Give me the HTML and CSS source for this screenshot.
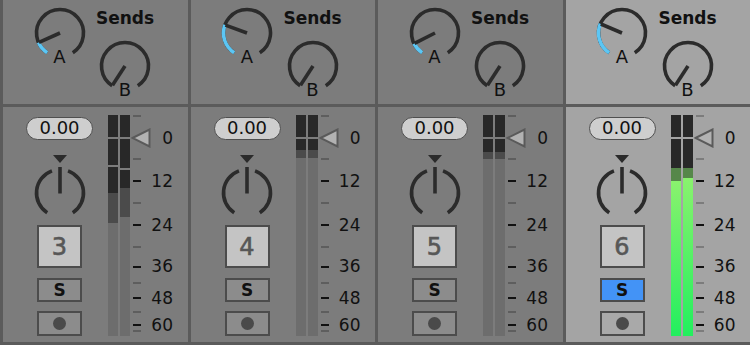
FILE: index.html
```html
<!DOCTYPE html>
<html>
<head>
<meta charset="utf-8">
<link rel="stylesheet" href="styles.css">
</head>
<body>
<div class="mixer">

  <!-- Track 3 -->
  <div class="strip">
    <div class="sends">
      <div class="knob knob-a">
        <svg viewBox="0 0 54 54"><path class="trk" d="M14.2 46.71A23.5 23.5 0 1 1 39.8 46.71"/><path class="val" d="M14.2 46.71A23.5 23.5 0 0 1 5.53 36.56"/><path class="ptr" d="M27 27L5.99 36.35"/></svg>
        <span class="klbl">A</span>
      </div>
      <div class="side">
        <h2>Sends</h2>
        <div class="knob">
          <svg viewBox="0 0 54 54"><path class="trk" d="M14.2 46.71A23.5 23.5 0 1 1 39.8 46.71"/><path class="ptr" d="M27 27L14.47 46.29"/></svg>
          <span class="klbl">B</span>
        </div>
      </div>
    </div>
    <div class="main">
      <div class="ctl">
        <div class="vol">0.00</div>
        <svg class="pan" viewBox="0 0 54 66"><path class="tri" d="M20 1H34L27 9Z"/><path class="trk" d="M14.2 58.71A23.5 23.5 0 0 1 18.96 16.92"/><path class="trk" d="M35.04 16.92A23.5 23.5 0 0 1 39.8 58.71"/><path class="ptr" d="M27 13V39.5"/></svg>
        <div class="num">3</div>
        <div class="btn solo">S</div>
        <div class="btn arm"><i></i></div>
      </div>
      <div class="meter">
        <div class="bar"><div class="clip"></div><div class="body"><b class="dk" style="height:26px"></b><b class="gp" style="height:2px"></b><b class="dk" style="height:26px"></b><b class="md" style="height:30px"></b><b class="lt"></b></div></div>
        <div class="bar"><div class="clip"></div><div class="body"><b class="dk" style="height:29px"></b><b class="gp" style="height:2px"></b><b class="dk" style="height:18px"></b><b class="md" style="height:29px"></b><b class="lt"></b></div></div>
      </div>
      <div class="scale">
        <i class="tk mn" style="top:8px"></i><i class="tk mn" style="top:51px"></i><i class="tk mj" style="top:73px"></i><i class="tk mn" style="top:95px"></i><i class="tk mj" style="top:117px"></i><i class="tk mn" style="top:139px"></i><i class="tk mj" style="top:159px"></i><i class="tk mn" style="top:175px"></i><i class="tk mj" style="top:190px"></i><i class="tk mn" style="top:204px"></i><i class="tk mj" style="top:217px"></i><i class="tk mn" style="top:223px"></i>
        <svg class="peak" viewBox="0 0 20 20"><path d="M1.5 10L18.5 1.5V18.5Z"/></svg>
        <span class="sl" style="top:23px">0</span><span class="sl" style="top:66px">12</span><span class="sl" style="top:110px">24</span><span class="sl" style="top:151px">36</span><span class="sl" style="top:183px">48</span><span class="sl" style="top:210px">60</span>
      </div>
    </div>
  </div>

  <!-- Track 4 -->
  <div class="strip">
    <div class="sends">
      <div class="knob knob-a">
        <svg viewBox="0 0 54 54"><path class="trk" d="M14.2 46.71A23.5 23.5 0 1 1 39.8 46.71"/><path class="val" d="M14.2 46.71A23.5 23.5 0 0 1 4.92 18.96"/><path class="ptr" d="M27 27L5.39 19.13"/></svg>
        <span class="klbl">A</span>
      </div>
      <div class="side">
        <h2>Sends</h2>
        <div class="knob">
          <svg viewBox="0 0 54 54"><path class="trk" d="M14.2 46.71A23.5 23.5 0 1 1 39.8 46.71"/><path class="ptr" d="M27 27L14.47 46.29"/></svg>
          <span class="klbl">B</span>
        </div>
      </div>
    </div>
    <div class="main">
      <div class="ctl">
        <div class="vol">0.00</div>
        <svg class="pan" viewBox="0 0 54 66"><path class="tri" d="M20 1H34L27 9Z"/><path class="trk" d="M14.2 58.71A23.5 23.5 0 0 1 18.96 16.92"/><path class="trk" d="M35.04 16.92A23.5 23.5 0 0 1 39.8 58.71"/><path class="ptr" d="M27 13V39.5"/></svg>
        <div class="num">4</div>
        <div class="btn solo">S</div>
        <div class="btn arm"><i></i></div>
      </div>
      <div class="meter">
        <div class="bar"><div class="clip"></div><div class="body"><b class="dk" style="height:11px"></b><b class="md" style="height:8px"></b><b class="lt"></b></div></div>
        <div class="bar"><div class="clip"></div><div class="body"><b class="dk" style="height:11px"></b><b class="md" style="height:8px"></b><b class="lt"></b></div></div>
      </div>
      <div class="scale">
        <i class="tk mn" style="top:8px"></i><i class="tk mn" style="top:51px"></i><i class="tk mj" style="top:73px"></i><i class="tk mn" style="top:95px"></i><i class="tk mj" style="top:117px"></i><i class="tk mn" style="top:139px"></i><i class="tk mj" style="top:159px"></i><i class="tk mn" style="top:175px"></i><i class="tk mj" style="top:190px"></i><i class="tk mn" style="top:204px"></i><i class="tk mj" style="top:217px"></i><i class="tk mn" style="top:223px"></i>
        <svg class="peak" viewBox="0 0 20 20"><path d="M1.5 10L18.5 1.5V18.5Z"/></svg>
        <span class="sl" style="top:23px">0</span><span class="sl" style="top:66px">12</span><span class="sl" style="top:110px">24</span><span class="sl" style="top:151px">36</span><span class="sl" style="top:183px">48</span><span class="sl" style="top:210px">60</span>
      </div>
    </div>
  </div>

  <!-- Track 5 -->
  <div class="strip">
    <div class="sends">
      <div class="knob knob-a">
        <svg viewBox="0 0 54 54"><path class="trk" d="M14.2 46.71A23.5 23.5 0 1 1 39.8 46.71"/><path class="val" d="M14.2 46.71A23.5 23.5 0 0 1 6.06 37.67"/><path class="ptr" d="M27 27L6.51 37.44"/></svg>
        <span class="klbl">A</span>
      </div>
      <div class="side">
        <h2>Sends</h2>
        <div class="knob">
          <svg viewBox="0 0 54 54"><path class="trk" d="M14.2 46.71A23.5 23.5 0 1 1 39.8 46.71"/><path class="ptr" d="M27 27L14.47 46.29"/></svg>
          <span class="klbl">B</span>
        </div>
      </div>
    </div>
    <div class="main">
      <div class="ctl">
        <div class="vol">0.00</div>
        <svg class="pan" viewBox="0 0 54 66"><path class="tri" d="M20 1H34L27 9Z"/><path class="trk" d="M14.2 58.71A23.5 23.5 0 0 1 18.96 16.92"/><path class="trk" d="M35.04 16.92A23.5 23.5 0 0 1 39.8 58.71"/><path class="ptr" d="M27 13V39.5"/></svg>
        <div class="num">5</div>
        <div class="btn solo">S</div>
        <div class="btn arm"><i></i></div>
      </div>
      <div class="meter">
        <div class="bar"><div class="clip"></div><div class="body"><b class="dk" style="height:13px"></b><b class="md" style="height:7px"></b><b class="lt"></b></div></div>
        <div class="bar"><div class="clip"></div><div class="body"><b class="dk" style="height:13px"></b><b class="md" style="height:7px"></b><b class="lt"></b></div></div>
      </div>
      <div class="scale">
        <i class="tk mn" style="top:8px"></i><i class="tk mn" style="top:51px"></i><i class="tk mj" style="top:73px"></i><i class="tk mn" style="top:95px"></i><i class="tk mj" style="top:117px"></i><i class="tk mn" style="top:139px"></i><i class="tk mj" style="top:159px"></i><i class="tk mn" style="top:175px"></i><i class="tk mj" style="top:190px"></i><i class="tk mn" style="top:204px"></i><i class="tk mj" style="top:217px"></i><i class="tk mn" style="top:223px"></i>
        <svg class="peak" viewBox="0 0 20 20"><path d="M1.5 10L18.5 1.5V18.5Z"/></svg>
        <span class="sl" style="top:23px">0</span><span class="sl" style="top:66px">12</span><span class="sl" style="top:110px">24</span><span class="sl" style="top:151px">36</span><span class="sl" style="top:183px">48</span><span class="sl" style="top:210px">60</span>
      </div>
    </div>
  </div>

  <!-- Track 6 (selected) -->
  <div class="strip sel">
    <div class="sends">
      <div class="knob knob-a">
        <svg viewBox="0 0 54 54"><path class="trk" d="M14.2 46.71A23.5 23.5 0 1 1 39.8 46.71"/><path class="val" d="M14.2 46.71A23.5 23.5 0 0 1 5.37 17.82"/><path class="ptr" d="M27 27L5.83 18.01"/></svg>
        <span class="klbl">A</span>
      </div>
      <div class="side">
        <h2>Sends</h2>
        <div class="knob">
          <svg viewBox="0 0 54 54"><path class="trk" d="M14.2 46.71A23.5 23.5 0 1 1 39.8 46.71"/><path class="ptr" d="M27 27L14.47 46.29"/></svg>
          <span class="klbl">B</span>
        </div>
      </div>
    </div>
    <div class="main">
      <div class="ctl">
        <div class="vol">0.00</div>
        <svg class="pan" viewBox="0 0 54 66"><path class="tri" d="M20 1H34L27 9Z"/><path class="trk" d="M14.2 58.71A23.5 23.5 0 0 1 18.96 16.92"/><path class="trk" d="M35.04 16.92A23.5 23.5 0 0 1 39.8 58.71"/><path class="ptr" d="M27 13V39.5"/></svg>
        <div class="num">6</div>
        <div class="btn solo on">S</div>
        <div class="btn arm"><i></i></div>
      </div>
      <div class="meter">
        <div class="bar"><div class="clip"></div><div class="body"><b class="dk" style="height:29px"></b><b class="pk" style="height:13px"></b><b class="gr"></b></div></div>
        <div class="bar"><div class="clip"></div><div class="body"><b class="dk" style="height:29px"></b><b class="pk" style="height:10px"></b><b class="gr"></b></div></div>
      </div>
      <div class="scale">
        <i class="tk mn" style="top:8px"></i><i class="tk mn" style="top:51px"></i><i class="tk mj" style="top:73px"></i><i class="tk mn" style="top:95px"></i><i class="tk mj" style="top:117px"></i><i class="tk mn" style="top:139px"></i><i class="tk mj" style="top:159px"></i><i class="tk mn" style="top:175px"></i><i class="tk mj" style="top:190px"></i><i class="tk mn" style="top:204px"></i><i class="tk mj" style="top:217px"></i><i class="tk mn" style="top:223px"></i>
        <svg class="peak" viewBox="0 0 20 20"><path d="M1.5 10L18.5 1.5V18.5Z"/></svg>
        <span class="sl" style="top:23px">0</span><span class="sl" style="top:66px">12</span><span class="sl" style="top:110px">24</span><span class="sl" style="top:151px">36</span><span class="sl" style="top:183px">48</span><span class="sl" style="top:210px">60</span>
      </div>
    </div>
  </div>

</div>
</body>
</html>
```

FILE: styles.css
```css
* { box-sizing: border-box; margin: 0; padding: 0; }

body {
  margin: 0;
  background: #5b5b5b;
  font-family: "DejaVu Sans", "Noto Sans", sans-serif;
  color: #111;
}

.mixer {
  width: 750px;
  height: 345px;
  display: grid;
  grid-template-columns: repeat(4, 1fr);
  column-gap: 3px;
  padding: 0 0 3px 3px;
  background: #5b5b5b;
}

.strip {
  --panel: #7c7c7c;
  --btn: #8c8c8c;
  --minor: #5e5e5e;
  --light: #6d6d6d;
  display: flex;
  flex-direction: column;
  gap: 3px;
  min-width: 0;
}
.strip.sel {
  --panel: #a4a4a4;
  --btn: #a9a9a9;
  --minor: #7c7c7c;
}

/* ---------- sends ---------- */
.sends {
  height: 104px;
  background: var(--panel);
  display: flex;
  align-items: flex-start;
  padding-left: 29.5px;
}

.knob {
  display: flex;
  flex-direction: column;
  align-items: center;
}
.knob svg {
  display: block;
  width: 54px;
  height: 54px;
}
.knob-a { margin-top: 5.5px; }

.klbl {
  font-size: 18px;
  line-height: 18px;
  margin-top: -11.5px;
  color: #111;
}

.side {
  width: 58px;
  margin-left: 9.5px;
  margin-top: 10px;
  display: flex;
  flex-direction: column;
  align-items: center;
}
.side h2 {
  font-size: 17px;
  line-height: 17px;
  font-weight: bold;
  color: #111;
}
.side .knob { margin-top: 11.5px; }

.trk, .ptr {
  fill: none;
  stroke: #2b2b2b;
  stroke-width: 3.6;
}
.val {
  fill: none;
  stroke: #5cc6f4;
  stroke-width: 3.6;
}
.tri { fill: #2b2b2b; }

/* ---------- main ---------- */
.main {
  height: 235px;
  background: var(--panel);
  display: flex;
  padding-left: 10px;
}

.ctl {
  width: 93px;
  display: flex;
  flex-direction: column;
  align-items: center;
  padding-top: 10px;
}

.vol {
  width: 67px;
  height: 23px;
  border: 1.5px solid #4f4f4f;
  border-radius: 12px;
  background: #cecece;
  font-size: 18px;
  line-height: 20px;
  text-align: center;
  color: #111;
}

.pan {
  display: block;
  width: 54px;
  height: 66px;
  margin-top: 14px;
}

.num {
  width: 45px;
  height: 43px;
  margin-top: 5px;
  border: 2px solid #4c4c4c;
  background: #c4c4c4;
  font-size: 24px;
  color: #575757;
  -webkit-text-stroke: 0.6px #575757;
  display: flex;
  align-items: center;
  justify-content: center;
}

.btn {
  width: 45px;
  height: 24px;
  border: 2px solid #4c4c4c;
  background: var(--btn);
  display: flex;
  align-items: center;
  justify-content: center;
}
.solo {
  margin-top: 10px;
  font-size: 17px;
  font-weight: bold;
  color: #111;
}
.solo.on { background: #4393f6; }
.arm {
  margin-top: 9px;
  height: 25px;
}
.arm i {
  width: 13px;
  height: 13px;
  border-radius: 50%;
  background: #4a4a4a;
}

/* ---------- meter ---------- */
.meter {
  width: 22px;
  height: 221px;
  margin: 8px 0 0 2px;
  display: flex;
  gap: 2px;
}
.bar {
  width: 10px;
  display: flex;
  flex-direction: column;
  gap: 2px;
}
.clip {
  height: 22px;
  background: #282828;
}
.body {
  flex: 1;
  display: flex;
  flex-direction: column;
}
.body b { display: block; flex: none; }
.dk { background: #282828; }
.gp { background: transparent; }
.md { background: #4b4b4b; }
.lt { flex: 1 !important; background: var(--light); }
.pk { background: #56874a; }
.gr { flex: 1 !important; background: linear-gradient(#8af26e, #22ef5e); }

/* ---------- scale ---------- */
.scale {
  position: relative;
  width: 48px;
}
.tk {
  position: absolute;
  left: 3px;
  width: 8px;
  height: 2px;
}
.tk.mj { background: #111; }
.tk.mn { background: var(--minor); }

.peak {
  position: absolute;
  left: 1px;
  top: 21px;
  width: 20px;
  height: 20px;
}
.peak path {
  fill: #b2b2b2;
  stroke: #5a5a5a;
  stroke-width: 2;
  stroke-linejoin: miter;
}

.sl {
  position: absolute;
  right: 5px;
  font-size: 17px;
  line-height: 17px;
  color: #111;
}
```
